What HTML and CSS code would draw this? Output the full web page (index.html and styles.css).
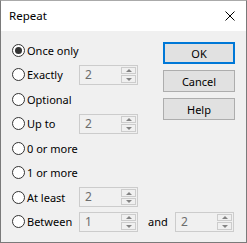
FILE: index.html
```html
<!DOCTYPE html>
<html lang="en">
<head>
    <meta charset="UTF-8">
    <title>Repeat</title>
    <link rel="stylesheet" href="styles.css">
</head>
<body>
    <div class="window">
        <div class="titlebar">
            <span class="title">Repeat</span>
            <svg class="close" width="10" height="10" viewBox="0 0 10 10">
                <path d="M0.5 0.5 L9.5 9.5 M9.5 0.5 L0.5 9.5" stroke="#000" stroke-width="1"/>
            </svg>
        </div>

        <div class="content">
            <div class="options">
                <div class="row">
                    <span class="radio checked"></span><span class="label">Once only</span>
                </div>
                <div class="row">
                    <span class="radio"></span><span class="label">Exactly</span>
                    <div class="spin"><span class="value">2</span><div class="arrows"><span class="up"></span><span class="down"></span></div></div>
                </div>
                <div class="row">
                    <span class="radio"></span><span class="label">Optional</span>
                </div>
                <div class="row">
                    <span class="radio"></span><span class="label">Up to</span>
                    <div class="spin"><span class="value">2</span><div class="arrows"><span class="up"></span><span class="down"></span></div></div>
                </div>
                <div class="row">
                    <span class="radio"></span><span class="label">0 or more</span>
                </div>
                <div class="row">
                    <span class="radio"></span><span class="label">1 or more</span>
                </div>
                <div class="row">
                    <span class="radio"></span><span class="label">At least</span>
                    <div class="spin"><span class="value">2</span><div class="arrows"><span class="up"></span><span class="down"></span></div></div>
                </div>
                <div class="row">
                    <span class="radio"></span><span class="label">Between</span>
                    <div class="spin"><span class="value">1</span><div class="arrows"><span class="up"></span><span class="down"></span></div></div>
                    <span class="and">and</span>
                    <div class="spin"><span class="value">2</span><div class="arrows"><span class="up"></span><span class="down"></span></div></div>
                </div>
            </div>

            <div class="buttons">
                <button class="default">OK</button>
                <button>Cancel</button>
                <button>Help</button>
            </div>
        </div>
    </div>
</body>
</html>
```
FILE: styles.css
```css
* {
    box-sizing: border-box;
    margin: 0;
    padding: 0;
}

body {
    font-family: "Noto Sans", "Open Sans", Arial, sans-serif;
    font-size: 11px;
    color: #000;
    background: #f0f0f0;
}

.window {
    width: 247px;
    height: 243px;
    border: 1px solid #7a7a7a;
    border-top-color: #aaaaaa;
    background: #f0f0f0;
    position: relative;
}

.titlebar {
    height: 30px;
    background: #fff;
    display: flex;
    align-items: center;
    justify-content: space-between;
    padding: 0 11px 0 8px;
}

.title {
    font-size: 11.5px;
    margin-top: -1px;
}

.content {
    display: flex;
    padding: 7px 0 0 11px;
}

.options {
    width: 139px;
}

.row {
    height: 24.5px;
    display: flex;
    align-items: center;
    position: relative;
    white-space: nowrap;
}

.radio {
    width: 13px;
    height: 13px;
    border: 1px solid #333;
    border-radius: 50%;
    background: #fff;
    flex: none;
    display: flex;
    align-items: center;
    justify-content: center;
}

.radio.checked::after {
    content: '';
    width: 7px;
    height: 7px;
    border-radius: 50%;
    background: #333;
}

.label {
    margin-left: 2px;
    width: 52px;
    flex: none;
}

.spin {
    width: 59px;
    height: 20px;
    border: 1px solid #cccccc;
    display: flex;
    justify-content: space-between;
    flex: none;
}

.value {
    color: #6d6d6d;
    font-size: 12px;
    padding-left: 5px;
    line-height: 17px;
}

.arrows {
    width: 16px;
    display: flex;
    flex-direction: column;
    gap: 1px;
    padding: 1px 1px 1px 0;
}

.arrows span {
    flex: 1;
    border: 1px solid #cccccc;
    background: #f0f0f0;
    display: flex;
    align-items: center;
    justify-content: center;
}

.up::after,
.down::after {
    content: '';
    border-left: 3px solid transparent;
    border-right: 3px solid transparent;
}

.up::after {
    border-bottom: 3px solid #838383;
}

.down::after {
    border-top: 3px solid #838383;
}

.and {
    width: 37px;
    padding-left: 10px;
    flex: none;
}

.buttons {
    display: flex;
    flex-direction: column;
    gap: 6px;
    margin-left: 12px;
    padding-top: 4px;
}

button {
    width: 72px;
    height: 22px;
    font-family: inherit;
    font-size: 11px;
    color: #000;
    background: #e1e1e1;
    border: 1px solid #adadad;
}

button.default {
    border: 2px solid #0078d7;
}
```
